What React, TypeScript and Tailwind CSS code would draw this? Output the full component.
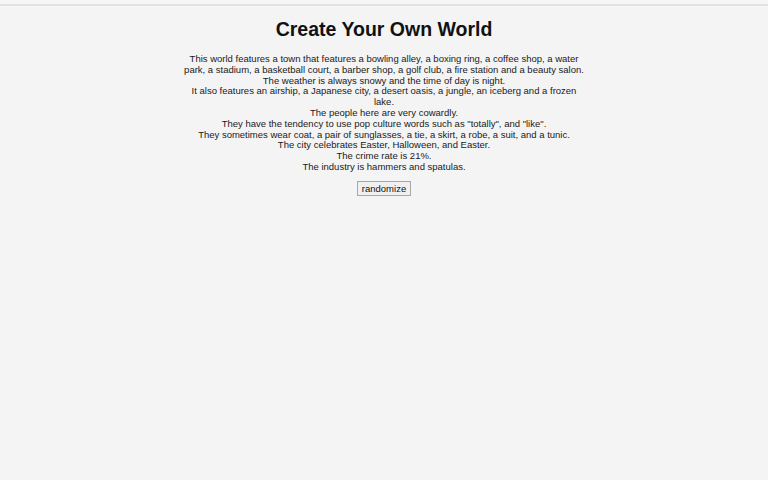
export default function App() {
  const lines = [
    "This world features a town that features a bowling alley, a boxing ring, a coffee shop, a water park, a stadium, a basketball court, a barber shop, a golf club, a fire station and a beauty salon.",
    "The weather is always snowy and the time of day is night.",
    "It also features an airship, a Japanese city, a desert oasis, a jungle, an iceberg and a frozen lake.",
    "The people here are very cowardly.",
    'They have the tendency to use pop culture words such as "totally", and "like".',
    "They sometimes wear coat, a pair of sunglasses, a tie, a skirt, a robe, a suit, and a tunic.",
    "The city celebrates Easter, Halloween, and Easter.",
    "The crime rate is 21%.",
    "The industry is hammers and spatulas.",
  ];

  return (
    <div className="min-h-screen bg-[#f4f4f4] font-['Liberation_Sans',Arial,sans-serif] text-[#111]">
      <div className="h-[6px] border-b-2 border-[#e2e2e2] bg-[#f6f6f6]" />
      <div className="flex flex-col items-center">
        <h1 className="mt-[11px] text-[19.5px] font-bold leading-[24px]">Create Your Own World</h1>
        <div className="mt-[13px] w-[402px] text-center text-[9.5px] leading-[10.8px] text-[#1a1a1a]">
          {lines.map((l) => (
            <p key={l}>{l}</p>
          ))}
        </div>
        <button className="mt-[8px] border border-[#a8a8a8] bg-[#f0f0f0] px-[4px] text-[9.5px] leading-[13px] text-[#111]">
          randomize
        </button>
      </div>
    </div>
  );
}
